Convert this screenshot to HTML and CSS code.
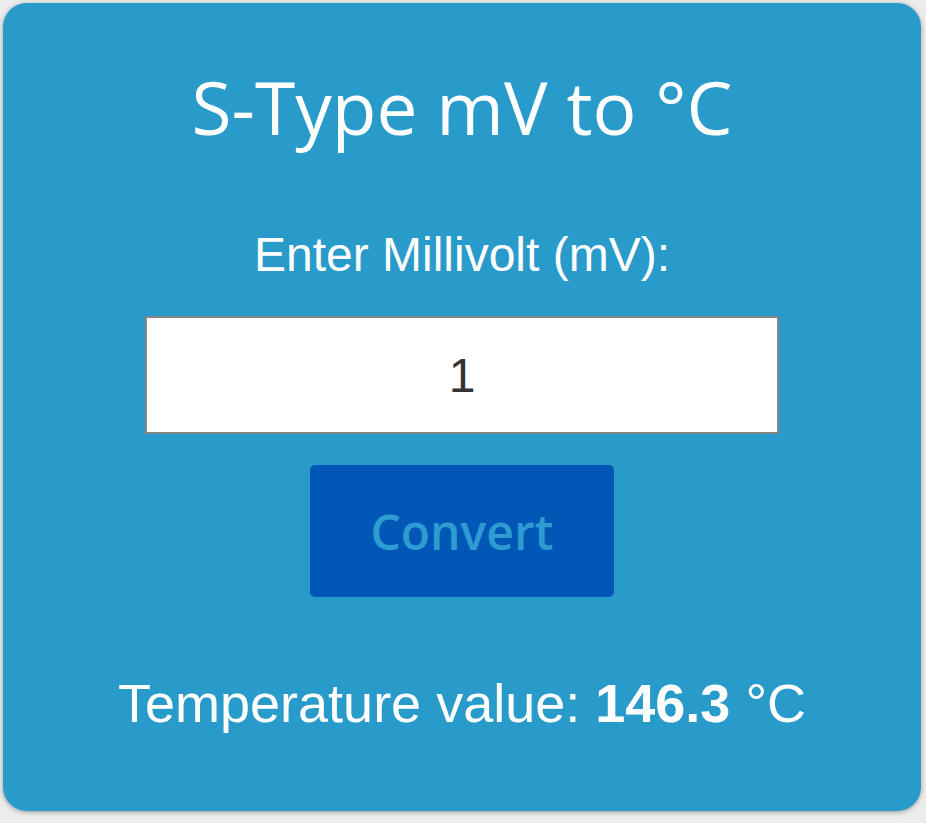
FILE: index.html
```html
<!DOCTYPE html>
<html lang="en">
<head>
<meta charset="utf-8">
<title>S-Type mV to °C</title>
<link rel="stylesheet" href="styles.css">
</head>
<body>
<main class="card">
  <h1 class="title">S-Type mV to °C</h1>
  <label class="label" for="mv">Enter Millivolt (mV):</label>
  <input class="field" id="mv" type="text" value="1">
  <button class="btn" type="button">Convert</button>
  <p class="result">Temperature value: <strong>146.3</strong> °C</p>
</main>
</body>
</html>
```

FILE: styles.css
```css
html, body {
  margin: 0;
  padding: 0;
  background: #ececec;
}
body {
  padding: 3px 5px 12px 3px;
}
.card {
  box-sizing: border-box;
  height: 808px;
  background: #299bcb;
  border-radius: 24px;
  box-shadow: 0 1px 5px rgba(0, 0, 0, 0.35);
  display: flex;
  flex-direction: column;
  align-items: center;
  padding-top: 64px;
  color: #fff;
}
.title {
  margin: 0;
  font-family: "Open Sans", sans-serif;
  font-weight: 400;
  font-size: 73px;
  line-height: 80px;
}
.label {
  margin-top: 80px;
  font-family: "Liberation Sans", Arial, sans-serif;
  font-size: 48px;
  line-height: 56px;
}
.field {
  box-sizing: border-box;
  margin-top: 33px;
  width: 634px;
  height: 118px;
  border: 2px solid #868686;
  background: #fff;
  text-align: center;
  font-family: "Liberation Sans", Arial, sans-serif;
  font-size: 48px;
  color: #333;
  padding: 0;
}
.btn {
  box-sizing: border-box;
  margin-top: 31px;
  width: 304px;
  height: 132px;
  border: none;
  border-radius: 5px;
  background: #0057b6;
  color: #2e9bd2;
  font-family: "Open Sans", sans-serif;
  font-weight: 600;
  font-size: 48px;
  padding: 0;
}
.result {
  margin: 76px 0 0;
  font-family: "Liberation Sans", Arial, sans-serif;
  font-size: 54px;
  line-height: 60px;
}
.result strong {
  font-weight: 700;
}
```
